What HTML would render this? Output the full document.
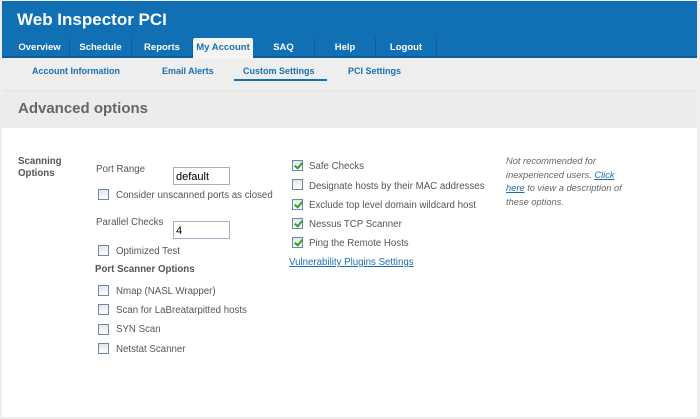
<!DOCTYPE html>
<html><head><style>
*{margin:0;padding:0;box-sizing:border-box}
body{width:700px;height:419px;background:#eee;font-family:"Liberation Sans",Arial,sans-serif;position:relative;overflow:hidden;color:#555}
.a{position:absolute;white-space:nowrap}
#hdr{left:2px;top:1px;width:695px;height:57px;background:#1170b3;border-bottom:2px solid #0d5c95}
#title{left:17px;top:10px;font-size:17px;font-weight:bold;color:#fff}
.tab{position:absolute;top:38px;height:19px;font-size:9.5px;font-weight:bold;color:#fff;text-align:center;line-height:19px;border-right:1px solid #0c5d96}
.tab.on{background:#f4f4f4;color:#1a6fb0;border-radius:2px 2px 0 0;height:21px;border-right:none}
.sub{position:absolute;top:66px;font-size:9px;font-weight:bold;color:#1a6fb0}
#ul{left:234px;top:79px;width:93px;height:2px;background:#1a6fb0}
#adv{left:2px;top:90px;width:695px;height:38px;background:#ececec;border-top:1px solid #e4e4e4}
#advt{left:18px;top:100px;font-size:15px;font-weight:bold;color:#666}
#main{left:2px;top:128px;width:695px;height:289px;background:#fff}
.t{position:absolute;font-size:9.7px;color:#555;white-space:nowrap}
.b{font-weight:bold}
.cb{position:absolute;width:11px;height:11px;border:1px solid #6b88a8;background:linear-gradient(#e6e6e6,#fff)}
.cb.c::after{content:"";position:absolute;left:3px;top:0px;width:3px;height:6px;border:solid #2aa52a;border-width:0 2px 2px 0;transform:rotate(40deg)}
.in{position:absolute;width:57px;height:18px;border:1px solid #9bb2c8;font-size:11px;color:#000;padding:3px 2px;background:#fff}
.lk{color:#1a6fb0;text-decoration:underline}
.i{font-style:italic;font-size:9.3px;line-height:13.5px;color:#666}
</style></head><body>
<div class="a" id="hdr"></div>
<div class="a" id="title">Web Inspector PCI</div>
<div class="tab" style="left:10px;width:60px">Overview</div>
<div class="tab" style="left:70px;width:62px">Schedule</div>
<div class="tab" style="left:132px;width:61px">Reports</div>
<div class="tab on" style="left:193px;width:60px">My Account</div>
<div class="tab" style="left:253px;width:62px">SAQ</div>
<div class="tab" style="left:315px;width:61px">Help</div>
<div class="tab" style="left:376px;width:61px">Logout</div>
<div class="sub" style="left:32px">Account Information</div>
<div class="sub" style="left:162px">Email Alerts</div>
<div class="sub" style="left:243px">Custom Settings</div>
<div class="sub" style="left:348px">PCI Settings</div>
<div class="a" id="ul"></div>
<div class="a" id="adv"></div>
<div class="a" id="advt">Advanced options</div>
<div class="a" id="main"></div>

<div class="t b" style="left:18px;top:156px;line-height:12px">Scanning<br>Options</div>
<div class="t" style="left:96px;top:164px">Port Range</div>
<div class="in" style="left:173px;top:167px">default</div>
<div class="cb" style="left:98px;top:189px"></div><div class="t" style="left:116px;top:190px">Consider unscanned ports as closed</div>
<div class="t" style="left:96px;top:217px">Parallel Checks</div>
<div class="in" style="left:173px;top:221px">4</div>
<div class="cb" style="left:98px;top:245px"></div><div class="t" style="left:116px;top:246px">Optimized Test</div>
<div class="t b" style="left:95px;top:264px">Port Scanner Options</div>
<div class="cb" style="left:98px;top:285px"></div><div class="t" style="left:116px;top:286px">Nmap (NASL Wrapper)</div>
<div class="cb" style="left:98px;top:304px"></div><div class="t" style="left:116px;top:305px">Scan for LaBreatarpitted hosts</div>
<div class="cb" style="left:98px;top:324px"></div><div class="t" style="left:116px;top:324px">SYN Scan</div>
<div class="cb" style="left:98px;top:343px"></div><div class="t" style="left:116px;top:344px">Netstat Scanner</div>

<div class="cb c" style="left:292px;top:160px"></div><div class="t" style="left:309px;top:161px">Safe Checks</div>
<div class="cb" style="left:292px;top:179px"></div><div class="t" style="left:309px;top:181px">Designate hosts by their MAC addresses</div>
<div class="cb c" style="left:292px;top:199px"></div><div class="t" style="left:309px;top:200px">Exclude top level domain wildcard host</div>
<div class="cb c" style="left:292px;top:218px"></div><div class="t" style="left:309px;top:219px">Nessus TCP Scanner</div>
<div class="cb c" style="left:292px;top:237px"></div><div class="t" style="left:309px;top:238px">Ping the Remote Hosts</div>
<div class="t lk" style="left:289px;top:257px">Vulnerability Plugins Settings</div>

<div class="t i" style="left:506px;top:155px">Not recommended for<br>inexperienced users. <span class="lk">Click</span><br><span class="lk">here</span> to view a description of<br>these options.</div>
</body></html>
